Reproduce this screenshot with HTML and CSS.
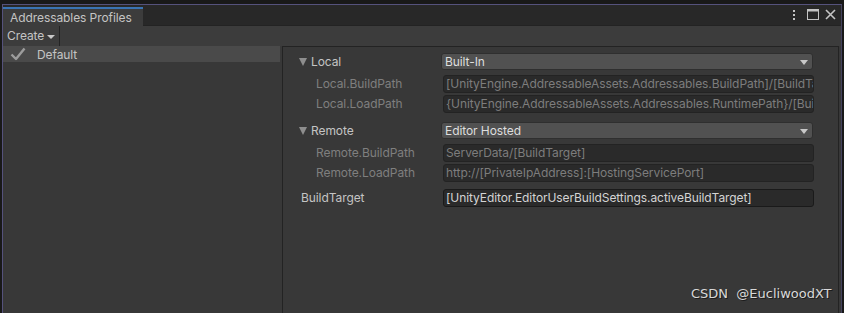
FILE: index.html
```html
<!DOCTYPE html>
<html>
<head>
<meta charset="utf-8">
<link rel="stylesheet" href="styles.css">
</head>
<body>
<div class="window">
  <div class="tabbar">
    <div class="tab">Addressables Profiles</div>
    <div class="tab-icons">
      <svg class="ic-dots" width="4" height="12" viewBox="0 0 4 12"><rect x="1" y="1" width="2" height="2" fill="#c4c4c4"/><rect x="1" y="5" width="2" height="2" fill="#c4c4c4"/><rect x="1" y="9" width="2" height="2" fill="#c4c4c4"/></svg>
      <svg class="ic-max" width="12" height="11" viewBox="0 0 12 11"><rect x="0.5" y="0.5" width="11" height="10" fill="none" stroke="#c4c4c4"/><rect x="0.5" y="0.5" width="11" height="2" fill="#c4c4c4"/></svg>
      <svg class="ic-close" width="11" height="11" viewBox="0 0 11 11"><path d="M1 1L10 10M10 1L1 10" stroke="#c4c4c4" stroke-width="1.6"/></svg>
    </div>
  </div>
  <div class="toolbar">
    <div class="create">Create <span class="caret"></span></div>
  </div>
  <div class="content">
    <div class="left">
      <div class="profile selected">
        <svg class="check" width="16" height="14" viewBox="0 0 16 14"><path d="M1.5 7.5L6 12L14.5 1.5" fill="none" stroke="#9c9c9c" stroke-width="2.4" stroke-linejoin="round"/></svg>
        <span>Default</span>
      </div>
    </div>
    <div class="right">
      <div class="row group first">
        <div class="label"><span class="tri"></span>Local</div>
        <div class="dropdown">Built-In<span class="dd-arrow"></span></div>
      </div>
      <div class="row sub sub1">
        <div class="label dis">Local.BuildPath</div>
        <div class="field dis">[UnityEngine.AddressableAssets.Addressables.BuildPath]/[BuildTarget]</div>
      </div>
      <div class="row sub sub2">
        <div class="label dis">Local.LoadPath</div>
        <div class="field dis">{UnityEngine.AddressableAssets.Addressables.RuntimePath}/[BuildTarget]</div>
      </div>
      <div class="row group second">
        <div class="label"><span class="tri"></span>Remote</div>
        <div class="dropdown">Editor Hosted<span class="dd-arrow"></span></div>
      </div>
      <div class="row sub sub1">
        <div class="label dis">Remote.BuildPath</div>
        <div class="field dis">ServerData/[BuildTarget]</div>
      </div>
      <div class="row sub sub2">
        <div class="label dis">Remote.LoadPath</div>
        <div class="field dis">http://[PrivateIpAddress]:[HostingServicePort]</div>
      </div>
      <div class="row var">
        <div class="label">BuildTarget</div>
        <div class="field active">[UnityEditor.EditorUserBuildSettings.activeBuildTarget]</div>
      </div>
    </div>
  </div>
</div>
<div class="watermark">CSDN&nbsp; @EucliwoodXT</div>
</body>
</html>
```
FILE: styles.css
```css
html, body {
  margin: 0;
  padding: 0;
  width: 844px;
  height: 313px;
  overflow: hidden;
  background: #191919;
  font-family: Inter, "Noto Sans", sans-serif;
  font-size: 12px;
  letter-spacing: -0.08px;
  color: #c4c4c4;
  position: relative;
}
.window {
  margin-top: 4px;
  margin-left: 2px;
  width: 838px;
  height: 309px;
  border-top: 1px solid #55527c;
  border-left: 1px solid #55527c;
  border-right: 1px solid #44425e;
  display: flex;
  flex-direction: column;
  background: #3c3c3c;
}
.tabbar {
  height: 21px;
  background: #282828;
  display: flex;
  align-items: flex-end;
  justify-content: space-between;
  border-bottom: 1px solid #232323;
  box-sizing: border-box;
}
.tab {
  width: 140px;
  height: 19px;
  box-sizing: border-box;
  background: #3c3c3c;
  border-top: 2px solid #3a74b4;
  padding-left: 7px;
  line-height: 17px;
  color: #c4c4c4;
  margin-bottom: -1px;
}
.tab-icons {
  display: flex;
  align-items: center;
  height: 21px;
  padding-right: 5px;
}
.ic-dots { margin-right: 11px; }
.ic-max { margin-right: 6px; }
.toolbar {
  height: 20px;
  display: flex;
  background: #3c3c3c;
}
.create {
  width: 57px;
  box-sizing: border-box;
  border-right: 1px solid #232323;
  padding-left: 4px;
  line-height: 20px;
  color: #c4c4c4;
  display: flex;
  align-items: center;
}
.caret {
  display: inline-block;
  width: 0;
  height: 0;
  border-left: 4px solid transparent;
  border-right: 4px solid transparent;
  border-top: 4px solid #c8c8c8;
  margin-left: 3px;
  margin-top: 1px;
}
.content {
  flex: 1;
  display: flex;
  background: #383838;
}
.left {
  width: 279px;
  background: #383838;
}
.profile {
  height: 16px;
  display: flex;
  align-items: center;
  padding-left: 7px;
  color: #c4c4c4;
}
.profile.selected {
  background: #4a4a4a;
  width: 270px;
}
.check { margin-right: 11px; }
.right {
  flex: 1;
  border-left: 1px solid #232323;
  border-top: 1px solid #232323;
  border-right: 1px solid #232323;
  margin-right: 2px;
  background: #383838;
  padding-top: 6px;
  padding-left: 16px;
}
.row {
  display: flex;
  align-items: center;
  height: 17px;
}
.row.group.second { margin-top: 10px; }
.row.sub1 { margin-top: 5px; }
.row.sub2 { margin-top: 3px; }
.row.var { margin-top: 8px; }
.label {
  width: 142px;
  flex: none;
  display: flex;
  align-items: center;
  color: #c4c4c4;
  white-space: nowrap;
}
.label.dis {
  color: #7f7f7f;
  padding-left: 17px;
  width: 126px;
}
.row.var .label { padding-left: 2px; width: 141px; }
.tri {
  display: inline-block;
  width: 0;
  height: 0;
  border-left: 4px solid transparent;
  border-right: 4px solid transparent;
  border-top: 8px solid #8e8e8e;
  margin-right: 4px;
}
.dropdown {
  position: relative;
  width: 372px;
  height: 17px;
  box-sizing: border-box;
  background: #515151;
  border: 1px solid #2f2f2f;
  border-radius: 3px;
  padding-left: 3px;
  line-height: 15px;
  color: #dedede;
}
.dd-arrow {
  position: absolute;
  right: 4px;
  top: 6px;
  width: 0;
  height: 0;
  border-left: 4px solid transparent;
  border-right: 4px solid transparent;
  border-top: 5px solid #c8c8c8;
}
.field {
  width: 371px;
  height: 18px;
  box-sizing: border-box;
  margin-left: 1px;
  background: #2a2a2a;
  border: 1px solid #232323;
  border-radius: 3px;
  padding-left: 2px;
  line-height: 16px;
  white-space: nowrap;
  overflow: hidden;
  color: #7d7d7d;
}
.field.active {
  color: #d4d4d4;
  border-color: #1a1a1a;
}
.watermark {
  position: absolute;
  left: 691px;
  top: 286px;
  font-family: "DejaVu Sans", sans-serif;
  font-size: 13px;
  letter-spacing: 0;
  color: #d8d8d8;
  text-shadow: 1px 1px 0 #1c1c1c;
  white-space: nowrap;
}
```
